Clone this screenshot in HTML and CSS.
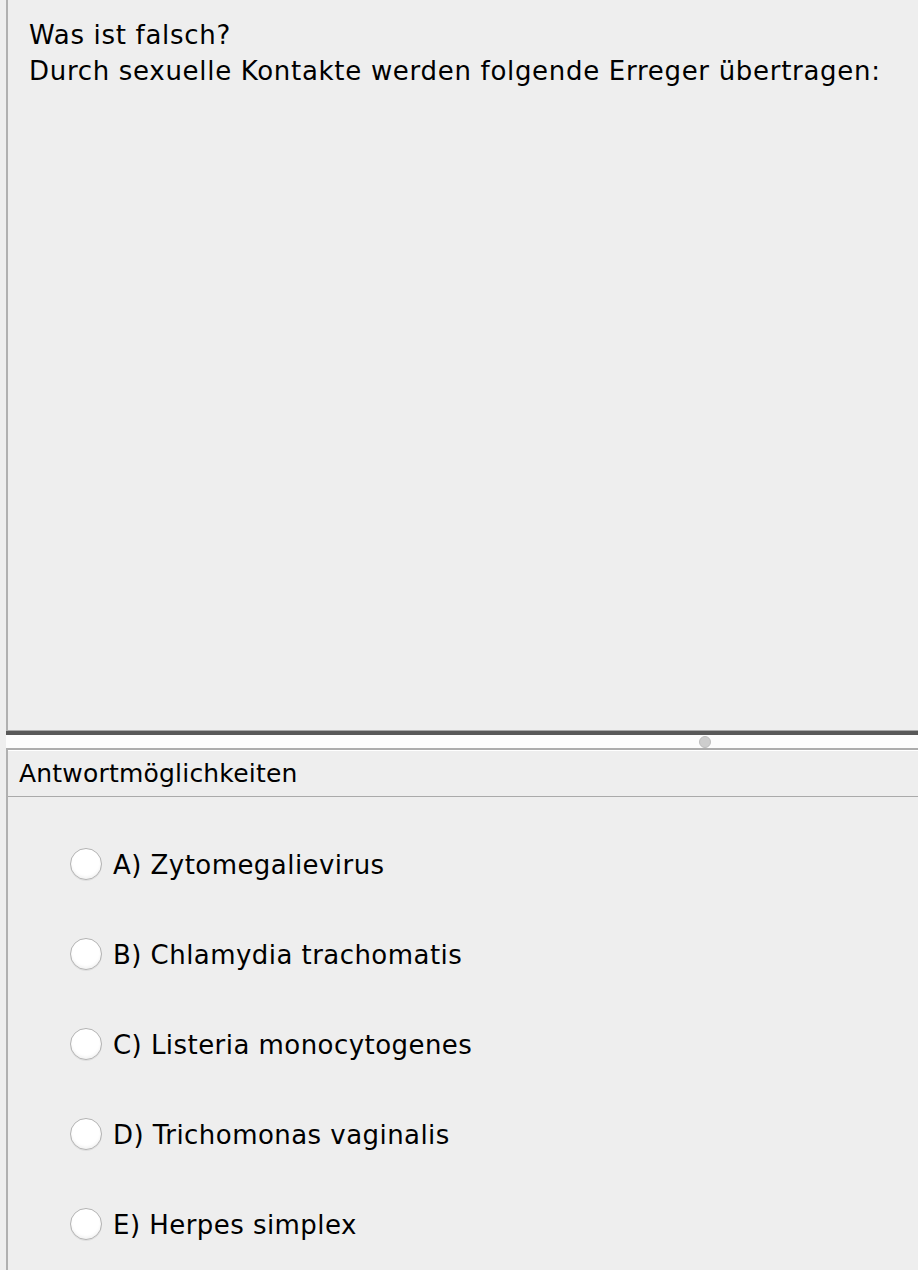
FILE: index.html
```html
<!DOCTYPE html>
<html lang="de">
<head>
	<meta charset="UTF-8">
	<title>Frage</title>
	<link rel="stylesheet" href="styles.css">
</head>
<body>
	<div class="frame">
		<!-- Fragetext -->
		<div class="question">
			<p>Was ist falsch?</p>
			<p>Durch sexuelle Kontakte werden folgende Erreger übertragen:</p>
		</div>
		<!-- Teiler -->
		<div class="divider"><span class="knob"></span></div>
		<!-- Antworten -->
		<div class="answers">
			<div class="answers_title">Antwortmöglichkeiten</div>
			<ul class="options">
				<li><span class="radio"></span>A) Zytomegalievirus</li>
				<li><span class="radio"></span>B) Chlamydia trachomatis</li>
				<li><span class="radio"></span>C) Listeria monocytogenes</li>
				<li><span class="radio"></span>D) Trichomonas vaginalis</li>
				<li><span class="radio"></span>E) Herpes simplex</li>
			</ul>
		</div>
	</div>
</body>
</html>
```
FILE: styles.css
```css
* {
	margin: 0;
	padding: 0;
}

html, body {
	height: 100%;
}

body {
	background-color: #eeeeee;
	font-family: "DejaVu Sans", "Liberation Sans", sans-serif;
	color: #000;
	padding-left: 6px;
	overflow: hidden;
}

.frame {
	display: flex;
	flex-direction: column;
	height: 1270px;
}

.question {
	height: 731px;
	border-left: 2px solid #b0b0b0;
	border-bottom: 1px solid #a8a8a8;
	padding: 17px 0 0 21px;
	font-size: 26px;
	letter-spacing: 0.7px;
	line-height: 36px;
	box-sizing: border-box;
	flex: none;
}

.divider {
	height: 13px;
	border-top: 4px solid #585858;
	border-bottom: 2px solid #acacac;
	background-color: #fcfcfc;
	position: relative;
	flex: none;
}

.knob {
	position: absolute;
	left: 693px;
	top: 1px;
	width: 10px;
	height: 10px;
	border-radius: 50%;
	background-color: #cdcdcd;
	border: 1px solid #bdbdbd;
}

.answers {
	flex: 1;
	border-left: 2px solid #b0b0b0;
}

.answers_title {
	height: 45px;
	line-height: 46px;
	padding-left: 11px;
	font-size: 25px;
	letter-spacing: 0.2px;
	border-top: 1px solid #fff;
	border-bottom: 1px solid #aaaaaa;
}

.options {
	list-style: none;
	padding: 51px 0 0 62px;
}

.options li {
	height: 90px;
	display: flex;
	align-items: flex-start;
	font-size: 26px;
	letter-spacing: 0.45px;
	line-height: 34px;
}

.radio {
	width: 30px;
	height: 30px;
	border-radius: 50%;
	border: 1px solid #b3b3b3;
	background-color: #fff;
	margin-right: 11px;
	box-shadow: inset 0 -2px 3px rgba(0, 0, 0, 0.05), 0 1px 0 rgba(0, 0, 0, 0.06);
	flex: none;
}
```
